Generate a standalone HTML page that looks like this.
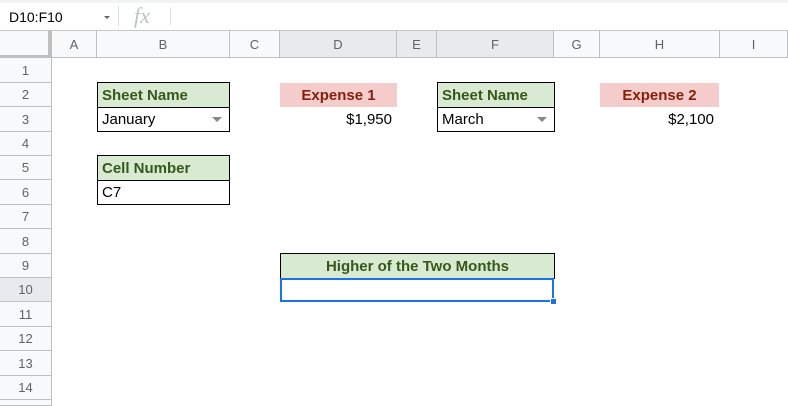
<!DOCTYPE html>
<html><head><style>
body{margin:0;width:788px;height:406px;overflow:hidden;background:#fff;font-family:"Liberation Sans",Arial,sans-serif;position:relative}
.a{position:absolute;box-sizing:border-box}
.ch{position:absolute;top:31px;height:27px;font-size:13px;color:#5f6368;text-align:center;line-height:27px;border-right:1px solid #c0c0c0;background:#f8f9fa;box-sizing:border-box}
.ch.s{background:#e8eaed}
.rh{position:absolute;left:0;width:52px;font-size:13px;color:#5f6368;text-align:center;border-bottom:1px solid #c0c0c0;background:#f8f9fa;box-sizing:border-box;border-right:1px solid #c0c0c0}
.g{background:#d9ead3;color:#38571a;font-weight:bold;font-size:15px;line-height:26px}
.p{background:#f4cccc;color:#85200c;font-weight:bold;font-size:15px;line-height:26px;text-align:center}
.t{font-size:15px;color:#000;line-height:26px}
</style></head><body>
<div class="a" style="left:0;top:0;width:788px;height:3px;background:#f1f3f4"></div>
<div class="a" style="left:0;top:3px;width:788px;height:28px;border-bottom:1px solid #c7c7c7"></div>
<div class="a" style="left:9px;top:9px;font-size:14px;color:#000">D10:F10</div>
<div class="a" style="left:104px;top:16px;width:0;height:0;border-left:3px solid transparent;border-right:3px solid transparent;border-top:3px solid #5f6368"></div>
<div class="a" style="left:118px;top:6px;width:1px;height:20px;background:#dadce0"></div>
<div class="a" style="left:134px;top:3px;font-family:'Liberation Serif',serif;font-style:italic;font-size:22px;color:#bdc1c6">fx</div>
<div class="a" style="left:170px;top:7px;width:1px;height:18px;background:#dadce0"></div>
<div class="a" style="left:0;top:31px;width:52px;height:27px;background:#f8f9fa;border-right:4px solid #c0c0c0;border-bottom:3px solid #c0c0c0"></div>
<div class="ch" style="left:52px;width:45px">A</div>
<div class="ch" style="left:97px;width:133px">B</div>
<div class="ch" style="left:230px;width:50px">C</div>
<div class="ch s" style="left:280px;width:117px">D</div>
<div class="ch s" style="left:397px;width:40px">E</div>
<div class="ch s" style="left:437px;width:117px">F</div>
<div class="ch" style="left:554px;width:46px">G</div>
<div class="ch" style="left:600px;width:120px">H</div>
<div class="ch" style="left:720px;width:68px">I</div>
<div class="a" style="left:52px;top:57px;width:736px;height:1px;background:#c0c0c0"></div>
<div class="rh" style="top:58px;height:25px;line-height:25px">1</div>
<div class="rh" style="top:83px;height:24px;line-height:24px">2</div>
<div class="rh" style="top:107px;height:25px;line-height:25px">3</div>
<div class="rh" style="top:132px;height:24px;line-height:24px">4</div>
<div class="rh" style="top:156px;height:24px;line-height:24px">5</div>
<div class="rh" style="top:180px;height:25px;line-height:25px">6</div>
<div class="rh" style="top:205px;height:24px;line-height:24px">7</div>
<div class="rh" style="top:229px;height:25px;line-height:25px">8</div>
<div class="rh" style="top:254px;height:24px;line-height:24px">9</div>
<div class="rh" style="top:278px;height:24px;line-height:24px;background:#e8eaed">10</div>
<div class="rh" style="top:302px;height:25px;line-height:25px">11</div>
<div class="rh" style="top:327px;height:24px;line-height:24px">12</div>
<div class="rh" style="top:351px;height:25px;line-height:25px">13</div>
<div class="rh" style="top:376px;height:24px;line-height:24px">14</div>
<div class="rh" style="top:400px;height:6px"></div>

<div class="a g" style="left:97px;top:82px;width:133px;height:26px;border:1px solid #000;padding-left:4px">Sheet Name</div>
<div class="a t" style="left:97px;top:107px;width:133px;height:25px;border:1px solid #000;border-top:none;padding-left:4px">January</div>
<div class="a" style="left:212px;top:117px;border-left:5px solid transparent;border-right:5px solid transparent;border-top:5px solid #888"></div>
<div class="a p" style="left:280px;top:83px;width:117px;height:24px">Expense 1</div>
<div class="a t" style="left:280px;top:107px;width:112px;text-align:right">$1,950</div>
<div class="a g" style="left:437px;top:82px;width:118px;height:26px;border:1px solid #000;padding-left:4px">Sheet Name</div>
<div class="a t" style="left:437px;top:107px;width:118px;height:25px;border:1px solid #000;border-top:none;padding-left:4px">March</div>
<div class="a" style="left:537px;top:117px;border-left:5px solid transparent;border-right:5px solid transparent;border-top:5px solid #888"></div>
<div class="a p" style="left:600px;top:83px;width:119px;height:24px">Expense 2</div>
<div class="a t" style="left:600px;top:107px;width:114px;text-align:right">$2,100</div>
<div class="a g" style="left:97px;top:155px;width:133px;height:26px;border:1px solid #000;padding-left:4px">Cell Number</div>
<div class="a t" style="left:97px;top:180px;width:133px;height:25px;border:1px solid #000;border-top:none;padding-left:4px">C7</div>
<div class="a g" style="left:280px;top:253px;width:275px;height:26px;border:1px solid #000;text-align:center">Higher of the Two Months</div>
<div class="a" style="left:280px;top:278px;width:274px;height:24px;border:2px solid #1a73e8"></div>
<div class="a" style="left:550px;top:298px;width:7px;height:7px;background:#1a73e8;border:1px solid #fff"></div>
</body></html>
